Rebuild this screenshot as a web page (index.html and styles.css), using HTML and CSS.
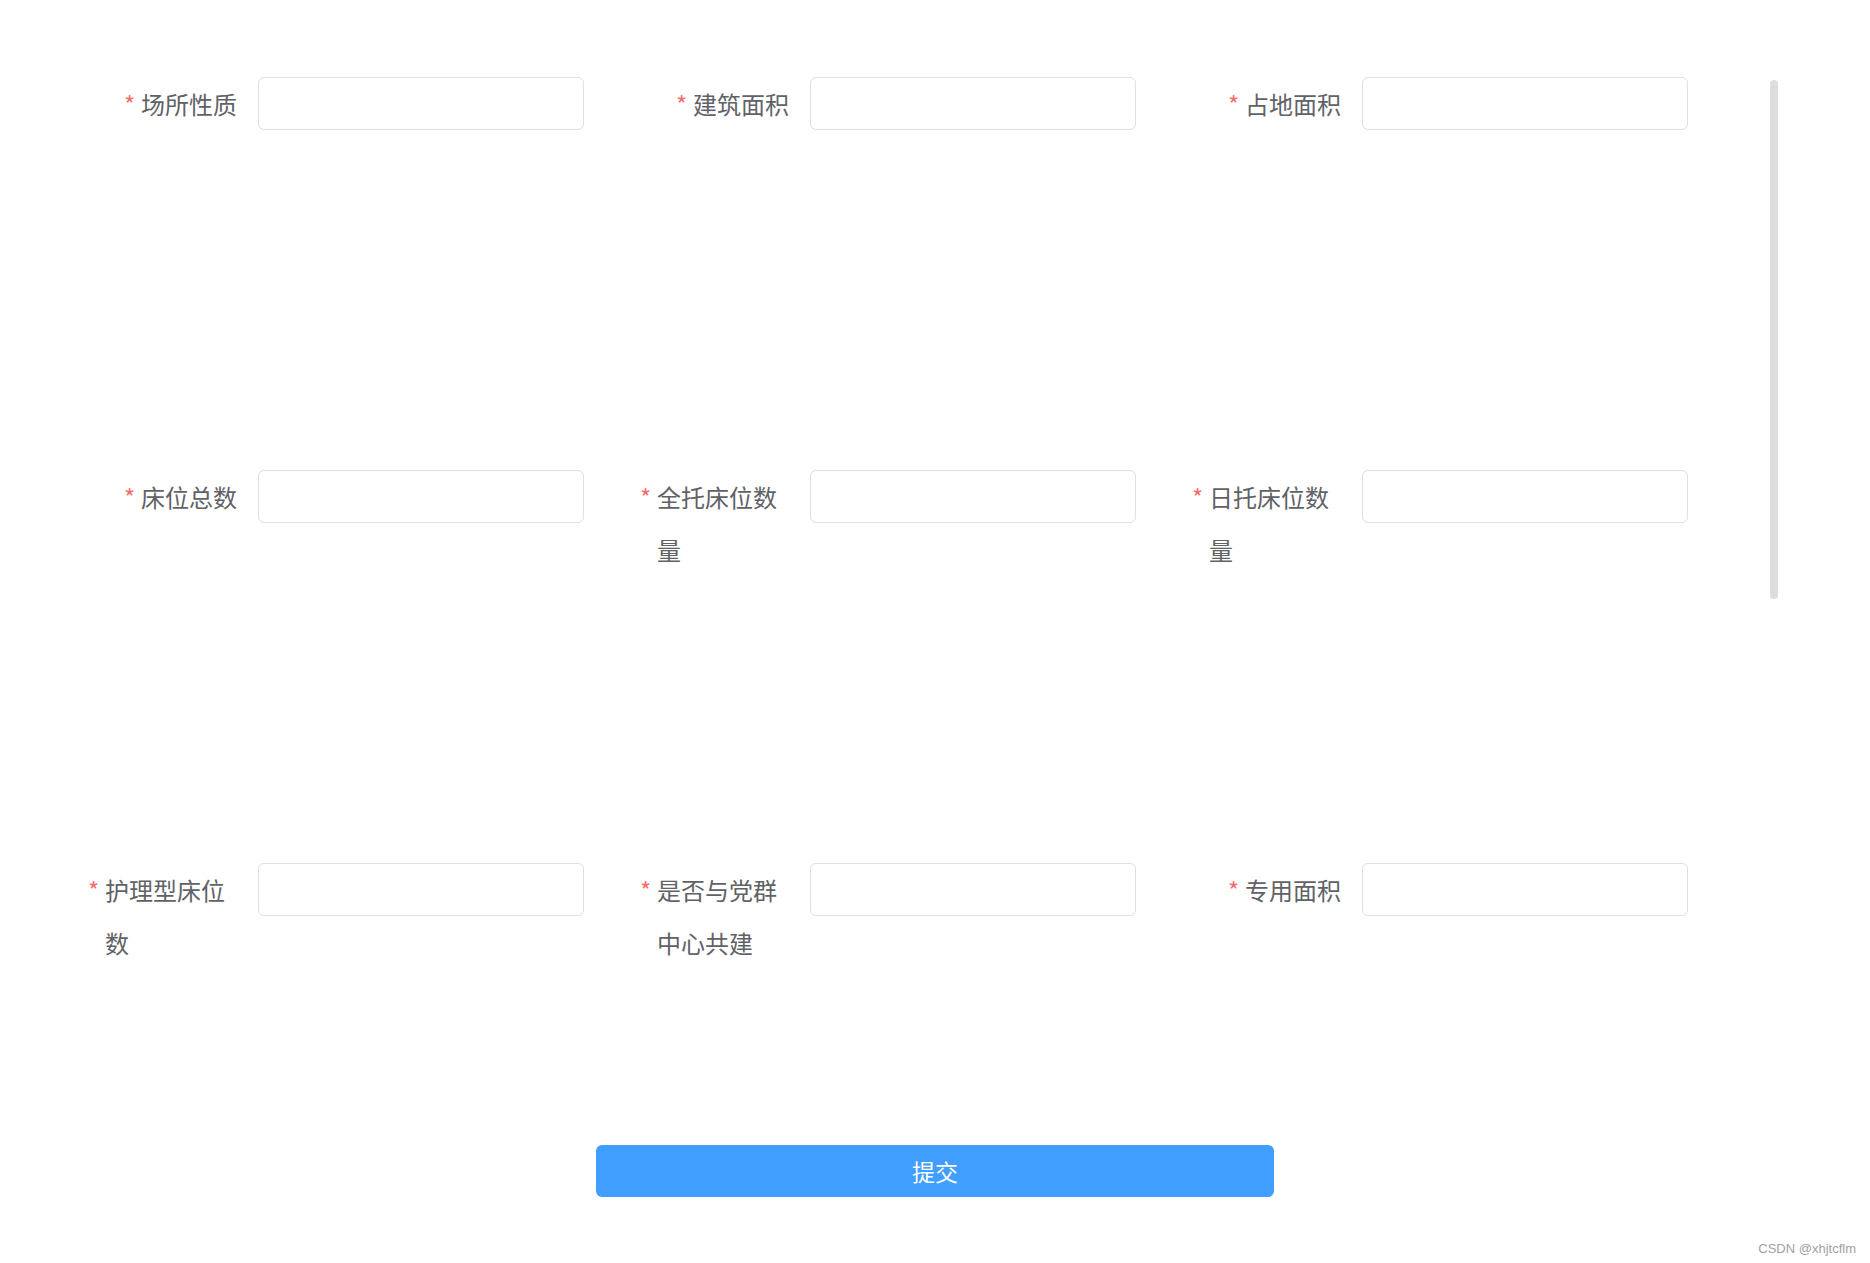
FILE: index.html
```html
<!DOCTYPE html>
<html lang="zh-CN">
<head>
<meta charset="utf-8">
<title>表单</title>
<link rel="stylesheet" href="styles.css">
</head>
<body>
<div class="page">
  <form class="form">
    <div class="grid">
      <div class="item"><label class="label"><span class="req">*</span><span class="text">场所性质</span></label><input class="input" type="text"></div>
      <div class="item"><label class="label"><span class="req">*</span><span class="text">建筑面积</span></label><input class="input" type="text"></div>
      <div class="item"><label class="label"><span class="req">*</span><span class="text">占地面积</span></label><input class="input" type="text"></div>
      <div class="item"><label class="label"><span class="req">*</span><span class="text">床位总数</span></label><input class="input" type="text"></div>
      <div class="item"><label class="label"><span class="req">*</span><span class="text">全托床位数量</span></label><input class="input" type="text"></div>
      <div class="item"><label class="label"><span class="req">*</span><span class="text">日托床位数量</span></label><input class="input" type="text"></div>
      <div class="item"><label class="label"><span class="req">*</span><span class="text">护理型床位数</span></label><input class="input" type="text"></div>
      <div class="item"><label class="label"><span class="req">*</span><span class="text">是否与党群中心共建</span></label><input class="input" type="text"></div>
      <div class="item"><label class="label"><span class="req">*</span><span class="text">专用面积</span></label><input class="input" type="text"></div>
    </div>
    <div class="actions"><button class="submit" type="button">提交</button></div>
  </form>
  <div class="scroll-thumb"></div>
  <div class="watermark">CSDN @xhjtcflm</div>
</div>
</body>
</html>
```
FILE: styles.css
```css
html, body {
  margin: 0;
  padding: 0;
  background: #ffffff;
}
body {
  font-family: "Noto Sans CJK SC", "Noto Sans", "Liberation Sans", sans-serif;
  width: 1870px;
  height: 1263px;
  overflow: hidden;
}
.page {
  position: relative;
  width: 1870px;
  height: 1263px;
}
.form {
  padding-top: 77px;
}
.grid {
  display: grid;
  grid-template-columns: repeat(3, 496px);
  grid-auto-rows: 53px;
  column-gap: 56px;
  row-gap: 340px;
  padding-left: 88px;
}
.item {
  display: flex;
  align-items: flex-start;
  height: 53px;
}
.label {
  box-sizing: border-box;
  width: 170px;
  flex: none;
  padding-right: 21px;
  display: flex;
  justify-content: flex-end;
  align-items: flex-start;
  font-size: 24px;
  line-height: 53px;
  color: #606266;
}
.req {
  flex: none;
  color: #f56c6c;
  width: 11px;
  margin-right: 6px;
  font-size: 24px;
}
.text {
  min-width: 0;
}
.input {
  box-sizing: border-box;
  width: 326px;
  height: 53px;
  border: 1.5px solid #dcdfe6;
  border-radius: 6px;
  background: #fff;
  margin: 0;
  padding: 0 18px;
  font-size: 24px;
  outline: none;
}
.actions {
  display: flex;
  justify-content: center;
  margin-top: 229px;
}
.submit {
  width: 678px;
  height: 52px;
  border: none;
  border-radius: 6px;
  background: #409eff;
  color: #fff;
  font-family: "Noto Sans CJK SC", "Noto Sans", sans-serif;
  font-size: 23px;
  padding: 0;
  cursor: pointer;
}
.scroll-thumb {
  position: absolute;
  left: 1770px;
  top: 80px;
  width: 8px;
  height: 519px;
  border-radius: 4px;
  background: #dddddd;
}
.watermark {
  position: absolute;
  right: 14px;
  top: 1241px;
  font-family: "Liberation Sans", Arial, sans-serif;
  font-size: 13px;
  line-height: 15px;
  color: #a0a0a0;
}
```
